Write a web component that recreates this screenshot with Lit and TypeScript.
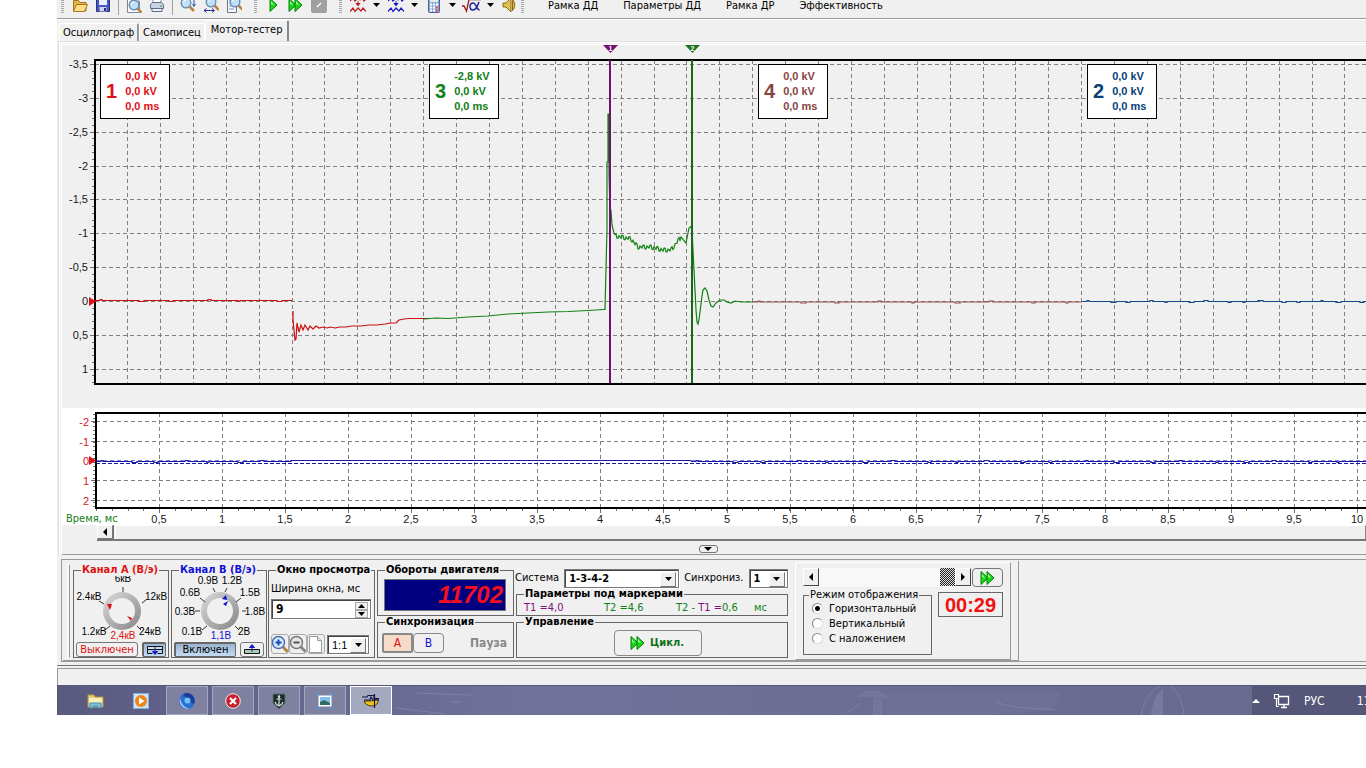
import { LitElement, html, svg, css } from "lit";
import { customElement, state } from "lit/decorators.js";

const UI = css`"DejaVu Sans Condensed", "DejaVu Sans", sans-serif`;
const ARIAL = css`"Liberation Sans", Arial, sans-serif`;

/* ---------- icons ---------- */

const icon = (body: unknown, w = 16, h = 16) =>
  html`<svg width=${w} height=${h} viewBox="0 0 ${w} ${h}" aria-hidden="true">${body}</svg>`;

const lens = (cx: number, cy: number) => svg`
  <path d="M${cx + 3} ${cy + 3}l5 5" stroke="#b98445" stroke-width="2.6"/>
  <circle cx=${cx} cy=${cy} r="4.8" fill="#bfe0f7" stroke="#6d8fb5" stroke-width="1.4"/>
  <path d="M${cx - 2.6} ${cy - 0.6}a2.8 2.8 0 0 1 2.6-2.2" stroke="#fff" fill="none"/>`;

const sheet = svg`
  <path d="M1.500 .5h8l4 4v11h-12z" fill="#fff" stroke="#7d8794"/>
  <path d="M9.500 .5v4h4" fill="#dfe6ee" stroke="#7d8794"/>`;

const openIcon = icon(svg`
  <path d="M1.500 14V3.500h5l1.500 2h6V14z" fill="#e8b44a" stroke="#a8741c"/>
  <path d="M1.500 14.500L4.500 7.500h11l-3 7z" fill="#ffe08a" stroke="#a8741c"/>`);
const saveIcon = icon(svg`
  <path d="M1.500 1.500h13v13h-13z" fill="#4a55c8" stroke="#2a3080"/>
  <path d="M4 2h8v6H4z" fill="#e9eefc"/><path d="M4.500 10h7v4.500h-7z" fill="#cfd3de"/>
  <path d="M9 11h2v3H9z" fill="#2a3080"/>`);
const previewIcon = icon(svg`${sheet}${lens(8, 8)}`);
const printIcon = icon(svg`
  <path d="M4.500 1.500h8l-1 5h-8z" fill="#fff" stroke="#8a93a2"/>
  <path d="M1.500 7.500l2-2h9l2 2v4h-13z" fill="#c9d4e3" stroke="#5e6d85"/>
  <path d="M3 11.500h10v3H3z" fill="#eef2f8" stroke="#5e6d85"/><path d="M11 9h2" stroke="#3a8c3a"/>`);
const zoomVIcon = icon(svg`${lens(6, 6)}<path d="M14 0v9M12.500 2.500L14 .5l1.500 2M12.500 7L14 9.500 15.500 7" stroke="#2b4fa8" fill="none"/>`);
const zoomHIcon = icon(svg`${lens(8, 5)}<path d="M1 13.500h10M3.500 11.500L1 13.500l2.500 2M9 11.500l2.500 2-2.500 2" stroke="#2b2f98" fill="none"/>`);
const zoomPageIcon = icon(svg`
  <path d="M1.500 .5h9v15h-9z" fill="#f5f7fa" stroke="#6c7683"/>
  <path d="M3 3h5M3 6h3M3 9h4M3 12h5" stroke="#7b98bb"/>${lens(9, 5)}`);
const tri = (x: number) => svg`
  <path d="M${x} 1.500v13l7-6.500z" fill="#16d816" stroke="#0b7a0b"/>
  <path d="M${x + 1} 4v3l3 1z" fill="#aaffaa"/>`;
const playIcon = icon(tri(5));
const fastIcon = icon(svg`${tri(1)}${tri(7)}`);
const offIcon = icon(svg`<rect width="16" height="16" rx="2" fill="#a0a0a0"/><path d="M6 10l4-4" stroke="#fff" stroke-width="1.500"/>`);
const waveIcon = (c: string) => icon(svg`
  <path d="M0 4l3-3 2 3 3-3 2 2 2-2 2 3 2-2" fill="none" stroke=${c} stroke-width="1.200"/>
  <path d="M0 14.500l3-3.500 2 3.500 3-3.500 3 3 2-3 3 3.500" fill="none" stroke=${c} stroke-width="1.200"/>
  <path d="M8 4v5M6 6.500h4L8 8.500z" fill=${c} stroke=${c}/>`);
const calcIcon = icon(svg`
  <rect x="2.500" y=".5" width="11" height="15" rx="1" fill="#8fa9d8" stroke="#4b5f96"/>
  <path d="M4 2h8v3H4z" fill="#dff0e0"/>
  <path d="M4 7.500h8M4 10.500h8M4 13.500h8" stroke="#fff" stroke-width="2" stroke-dasharray="2 1"/>
  <path d="M10 10.500h2M10 13.500h2" stroke="#d44" stroke-width="2"/>`);
const rootIcon = icon(svg`
  <path d="M0 9h2l2.500 5L7 2.500h12" fill="none" stroke="#a01818" stroke-width="1.300"/>
  <path d="M17 5c-2 6-4 8-6 8s-3-1.500-3-3.500S9 6 11.500 6s3 7 6 7" fill="none" stroke="#24249a" stroke-width="1.500"/>`, 19);
const speakerIcon = icon(svg`
  <path d="M1 6h3l5-5v14l-5-5H1z" fill="#e3c04a" stroke="#8a6a14"/>
  <path d="M10.500 2.500c3 3 3 8 0 11z" fill="#d7b55a" stroke="#8a6a14"/>`);

const zoomIn = icon(svg`<path d="M11 11l6 6" stroke="#b98445" stroke-width="3"/><circle cx="7.500" cy="7.500" r="6" fill="#d6ecff" stroke="#4a6fae" stroke-width="1.500"/><path d="M4.500 7.500h6M7.500 4.500v6" stroke="#1c49b8" stroke-width="2"/>`, 18, 18);
const zoomOut = icon(svg`<path d="M11 11l6 6" stroke="#888" stroke-width="3"/><circle cx="7.500" cy="7.500" r="6" fill="#e6e6e6" stroke="#777" stroke-width="1.500"/><path d="M4.500 7.500h6" stroke="#555" stroke-width="2"/>`, 18, 18);
const blankPage = icon(svg`<path d="M2.500 1.500h8l4 4v12h-12z" fill="#fff" stroke="#999"/><path d="M10.500 1.500v4h4" fill="#e4e4e4" stroke="#999"/>`, 18, 18);
const dirDown = icon(svg`
  <path d="M1.500 1.500h15v3h-15z" fill="#d5dde8" stroke="#111"/>
  <path d="M1.500 4.500v4h5M16.500 4.500v4h-5" fill="none" stroke="#111"/>
  <path d="M9 2v5M6.500 6.500h5L9 9.500z" stroke="#1818c8" fill="#1818c8"/>`, 18, 11);
const dirUp = icon(svg`
  <path d="M1.500 5.500h15v4h-15z" fill="#a9cfae" stroke="#111"/>
  <path d="M9 8V3M6.500 3.500h5L9 .5z" stroke="#1818c8" fill="#1818c8"/>`, 18, 11);

const arrow = (dir: "left" | "right" | "up" | "down", w: number, h: number) => {
  const d = { left: `M${w} 0v${h}L0 ${h / 2}z`, right: `M0 0v${h}L${w} ${h / 2}z`,
    up: `M0 ${h}h${w}L${w / 2} 0z`, down: `M0 0h${w}L${w / 2} ${h}z` }[dir];
  return icon(svg`<path d=${d} fill="#000"/>`, w, h);
};

/* ---------- taskbar icons ---------- */

const folderTask = icon(svg`
  <path d="M1 3h6l1 2h8v10H1z" fill="#e7cf7a" stroke="#b79b45"/><path d="M2 6h13v5H2z" fill="#f8eeb6"/>
  <path d="M3 16v-5h11v5h-3v-2H6v2z" fill="#79c3e6" stroke="#3f8fb8"/>`, 17, 17);
const playerTask = icon(svg`
  <rect x=".5" y=".5" width="15" height="15" fill="#cfe5f5" stroke="#7fb2d8"/>
  <circle cx="8" cy="8" r="6" fill="#f08418"/><path d="M6 4.500v7l5.500-3.500z" fill="#fff"/>`);
const browserTask = icon(svg`
  <circle cx="8" cy="8" r="8" fill="#2d6fcf"/><path d="M8 0a8 8 0 0 1 7 11L10 8 4 1z" fill="#1b3c9a"/>
  <path d="M1 5a8 8 0 0 0 9 10.500C4 14 2 10 1 5z" fill="#9fd0f5"/><circle cx="8.500" cy="7.500" r="3" fill="#6fc3f7"/>`);
const crossTask = icon(svg`
  <circle cx="8" cy="8" r="7.300" fill="#c8202c" stroke="#eee"/><path d="M5 5l6 6M11 5l-6 6" stroke="#fff" stroke-width="2.200"/>`);
const anchorTask = icon(svg`
  <path d="M2 1h12v9l-6 6-6-6z" fill="#1d2b2b" stroke="#53706c"/>
  <path d="M8 3v10M5.500 6h5M4 9c1 3 3 3.500 4 4 1-.5 3-1 4-4" stroke="#d5e2dc" fill="none" stroke-width="1.200"/><circle cx="8" cy="3.500" r="1.200" fill="#d5e2dc"/>`);
const pictureTask = icon(svg`
  <path d="M.5 4V.5H4M12 .5h3.500V4M15.500 12v3.500H12M4 15.500H.5V12" fill="none" stroke="#48a0e0"/>
  <rect x="1.500" y="2.500" width="13" height="11" fill="#fff"/><path d="M3 4h10v8H3z" fill="#7fc0ee"/><path d="M3 12V9l4-2 6 3v2z" fill="#2c6a62"/>`);
const scopeTask = icon(svg`
  <path d="M2 8c2 6 12 7 14 1v-3L9 8z" fill="#f0c420" stroke="#4a3c08"/>
  <path d="M0 4h5l1-1.500h6v3h5M2 7h6l1-3 2 3h6M12.500 1v14" fill="none" stroke="#15154a" stroke-width="1.200"/>`, 18);
const netTask = icon(svg`
  <path d="M5.500 3.500h10v8h-10zM8 14.500h6M11 11.500v3" fill="none" stroke="#fff" stroke-width="1.300"/>
  <path d="M1.500 1.500h4v4h-4zM3.500 5.500v8h2" fill="#4e5078" stroke="#fff" stroke-width="1.200"/>`, 17);

/* ---------- oscillogram ---------- */

const COL = 32.9;
const ROW = 33.86;
const HALF_MS = 63.05;
const ZERO = 241;
const SPAN = 4000;

const noisy = (x0: number, x1: number, y: number, every: number) => {
  let d = `M${x0} ${y}`;
  for (let x = x0 + 5, i = 0; x < x1 - 12; x += every, i++) {
    const w = 2 + (i * 7) % 4;
    d += `H${x + (i * 5) % 9}v${i % 3 ? 1 : -1}h${w}V${y}`;
  }
  return d + `H${x1}`;
};

const plateau = () => {
  const base: [number, number][] = [
    [517, 165], [519, 173], [521, 176], [536, 179], [543, 187], [556, 187], [568, 190], [576, 190],
    [586, 177], [591, 183], [594, 168], [597, 166],
  ];
  let d = "L516 150";
  for (let i = 0; i < base.length - 1; i++) {
    const [xa, ya] = base[i], [xb, yb] = base[i + 1];
    for (let x = xa; x < xb; x++) {
      const j = xa > 519 && xa < 586 ? [0, 2, -2, 1, -1, 2, -2][(x * 3) % 7] : 0;
      d += `L${x} ${(ya + ((yb - ya) * (x - xa)) / (xb - xa) + j).toFixed(1)}`;
    }
  }
  return d + "L597 170 598 190 600 230 601 250 602 262 603 264 604 260 605 252 606 244 607 236 608 230 610 228 612 231 614 240 616 246 618 247 621 243 625 240 629 240 632 242 636 243 640 241 646 242H658";
};

const TRACES: [string, string][] = [
  ["#c81010", noisy(0, 197, 240.5, 34)],
  ["#c81010", "M198 251v9l2 20 1-1 1-16 2 9 2-7 2 5 2-5 3 5 2-4 3 3 3-3 3 2 4-1 4 1 3-1 5 1 5-1h6l6-1h9l8-1h8l8-1 6-1h5l3-3 5-1 5-.5h20"],
  ["#108010", "M329 259l12-1 12 .5 20-1.500 20-1 20-2 20-1 20-1 20-.5 20-1 16-1h1L512 168V102h1V54h1v60l1 36" + plateau()],
  ["#904848", noisy(658, 987, 242, 38)],
  ["#104888", noisy(987, SPAN, 241.5, 19)],
];

const range = (n: number) => Array.from({ length: Math.max(0, n) }, (_, i) => i);
const comma = (n: number) => String(n).replace(".", ",");

const mainPlot = (width: number) => svg`
  <g transform="translate(33 15)">
    ${range(Math.ceil((width - 95) / COL)).map((i) => {
      const x = Math.round((i + 1) * COL - 0.8) + 0.5;
      return svg`<path class="grid" d="M${x} 0V324"/>`;
    })}
    ${range(10).map((i) => {
      const y = Math.round(4 + i * ROW) + 0.5;
      return svg`<path class="grid" d="M0 ${y}H${SPAN}"/><path class="tick" d="M-5 ${y}h4"/>
        <text class="num" x="-7" y=${y + 3.5} text-anchor="end">${comma(-3.5 + i * 0.5)}</text>`;
    })}
    ${range(48).map((i) => svg`<path class="tick" d="M-3 ${Math.round(4 + i * 6.77) + 0.5}h2"/>`)}
    <path d="M${SPAN} 0H0V324H${SPAN}" fill="none" stroke="#000" stroke-width="2"/>
    ${TRACES.map(([c, d]) => svg`<path class="trace" d=${d} stroke=${c}/>`)}
    <path d="M-6 ${ZERO - 4}v9l7-4.500z" fill="#e01010"/>
    <path d="M515 0V323" stroke="#701070" stroke-width="2"/>
    <path d="M597 0V323" stroke="#186818" stroke-width="2"/>
    <path d="M508 -15h15l-7.500 8z" fill="#701070"/><text class="mark" x="515.500" y="-9">1</text>
    <path d="M590 -15h15l-7.500 8z" fill="#187018"/><text class="mark" x="597.500" y="-9">2</text>
  </g>`;

const lowerPlot = (width: number) => svg`
  <g transform="translate(34 5)">
    ${range(Math.floor((width - 104) / HALF_MS)).map((i) => {
      const x = Math.round((i + 1) * HALF_MS) + 0.5;
      return svg`<path class="grid" d="M${x} 0V94"/><path class="tick" d="M${x} 96v4"/>
        <text class="num" x=${x - 0.5} y="110" text-anchor="middle">${comma((i + 1) / 2)}</text>`;
    })}
    ${range(Math.ceil((width - 96) / 15.76)).map((i) => svg`<path class="tick" d="M${Math.round(i * 15.76) + 0.5} 96v2"/>`)}
    ${range(5).map((i) => {
      const y = Math.round(8 + i * 19.7) + 0.5;
      return svg`<path class=${i === 2 ? "grid zero" : "grid"} d="M0 ${y}H${SPAN}"/><path class="tick" d="M-5 ${y}h4"/>
        <text class="num red" x="-7" y=${y + 4} text-anchor="end">${i - 2}</text>`;
    })}
    ${range(24).map((i) => svg`<path class="tick" d="M-3 ${i * 4 + 1.5}h2"/>`)}
    <path d="M0 50.500H${SPAN}" stroke="#1818a8" stroke-dasharray="4 2"/>
    <path class="trace" stroke="#1818a8" d=${noisy(0, 195, 48.5, 26) + "V47.500H595" + noisy(595, SPAN, 48.5, 32)}/>
    <path d="M${SPAN} 0H0V95H${SPAN}" fill="none" stroke="#000" stroke-width="2"/>
    <path d="M-7 43v9l7-4.500z" fill="#e01010"/>
  </g>
  <text class="num time" x="4" y="114">Время, мс</text>`;

/* ---------- channel knob ---------- */

interface Knob { color: string; value: string; marks: [string, number, number][]; ticks: string; pointer: string; }

const KNOB_A: Knob = {
  color: "#e01010", value: "2,4кВ",
  marks: [["6кВ", 49, 6], ["2.4кВ", 15, 24], ["12кВ", 82, 24], ["1.2кВ", 20, 59], ["24кВ", 76, 59]],
  ticks: "M49 11v5M25 25l5 3M68 27l4-3M31 54l5-4M63 50l4 4",
  pointer: "M33 28h5l-2 6zM53 40l5 2-1 3z",
};
const KNOB_B: Knob = {
  color: "#1010d8", value: "1,1В",
  marks: [["0.9В", 36, 8], ["1.2В", 60, 8], ["0.6В", 18, 20], ["1.5В", 78, 20], ["0.3В", 13, 39], ["1.8В", 83, 39], ["0.1В", 20, 59], ["2В", 72, 59]],
  ticks: "M41 12l2 4M55 12l-2 4M28 22l5 4M69 22l-5 4M23 35h5M70 35h4M30 54l5-4M63 50l4 4",
  pointer: "M50 23l4-4 1 5zM51 28l5-3-2 5z",
};

const knob = (k: Knob, id: string) => html`<svg class="knob" width="100%" height="66" aria-hidden="true">
  <defs><linearGradient id=${id} x1="0" y1="0" x2="1" y2="1"><stop offset="0" stop-color="#dcdcdc"/><stop offset="1" stop-color="#858585"/></linearGradient></defs>
  <circle cx="48" cy="35" r="19" fill="url(#${id})"/>
  <circle cx="48" cy="35" r="13" fill="#f0f0f0"/>
  <path d=${k.ticks} stroke="#333" fill="none"/>
  <path d=${k.pointer} fill=${k.color}/>
  ${k.marks.map(([t, x, y]) => svg`<text class="scale" x=${x} y=${y} text-anchor="middle">${t}</text>`)}
  <text class="scale" x="49" y="63" text-anchor="middle" fill=${k.color}>${k.value}</text>
</svg>`;

const CARDS = [
  { n: "1", color: "#e01018", v: ["0,0 kV", "0,0 kV", "0,0 ms"] },
  { n: "3", color: "#108018", v: ["-2,8 kV", "0,0 kV", "0,0 ms"] },
  { n: "4", color: "#884444", v: ["0,0 kV", "0,0 kV", "0,0 ms"] },
  { n: "2", color: "#084078", v: ["0,0 kV", "0,0 kV", "0,0 ms"] },
];

@customElement("app-root")
export class AppRoot extends LitElement {
  @state() private mode = 0;
  @state() private pageWidth = window.innerWidth;

  private onResize = () => { this.pageWidth = window.innerWidth; };

  connectedCallback() {
    super.connectedCallback();
    window.addEventListener("resize", this.onResize);
  }

  disconnectedCallback() {
    window.removeEventListener("resize", this.onResize);
    super.disconnectedCallback();
  }

  static styles = css`
    :host { display: block; overflow: hidden; font: 11px/14px ${UI}; color: #000; background: #fff; }
    * { box-sizing: border-box; }
    svg { display: block; flex: none; }
    button { font: inherit; color: inherit; padding: 0; margin: 0; border: 0; background: none; display: flex; align-items: center; justify-content: center; flex: none; }
    select, input { font: inherit; color: inherit; margin: 0; }
    .window { margin-left: 57px; background: #f0f0f0; }

    .toolbar { display: flex; align-items: center; height: 27px; margin-top: -8px; padding-left: 4px; border-bottom: 1px solid #999; box-shadow: 0 1px #fff; }
    .grip { width: 3px; height: 18px; margin-right: 4px; background: repeating-linear-gradient(#a8a8a8 0 1px, #f0f0f0 1px 2px); flex: none; }
    .grip.spaced { margin-left: 9px; }
    .sep { width: 8px; height: 20px; display: flex; justify-content: center; }
    .sep::before { content: ""; width: 1px; background: #a0a0a0; }
    .tool { width: 23px; height: 22px; }
    .drop { width: 15px; height: 22px; }
    .menu { display: flex; gap: 25px; margin-left: 20px; padding-top: 2px; line-height: 12px; white-space: nowrap; }

    .tabs { display: flex; align-items: flex-end; height: 21px; margin-top: 1px; padding-left: 2px; }
    .tab { height: 18px; padding: 0 3px; border: 1px solid #fff; border-right: 2px solid #999; border-bottom: 0; border-radius: 2px 2px 0 0; }
    .tab.plain { border-right: 1px solid #fff; }
    .tab.active { height: 21px; padding: 0 5px 3px; border-right: 2px solid #888; }

    .page { margin-left: 1px; padding: 2px 0 0 2px; border: 1px solid #dedede; border-width: 1px 0 0 1px; box-shadow: inset 1px 1px #fff; }
    .panel { border: 1px solid #fff; border-width: 1px 0 0 1px; }
    .plot { position: relative; }
    .plot.white { background: #fff; }
    .plot > svg { width: 100%; overflow: hidden; }
    .grid { stroke: #808080; stroke-dasharray: 4 3; fill: none; }
    .grid.zero { stroke: #8080d8; }
    .tick { stroke: #707070; }
    .trace { fill: none; stroke-width: 1.2px; }
    .num { font: 11px ${ARIAL}; fill: #181818; }
    .num.red { fill: #d01818; }
    .num.time { font-family: ${UI}; fill: #108010; }
    .mark { font: bold 7px ${ARIAL}; fill: #fff; text-anchor: middle; }
    .cards { position: absolute; inset: 19px auto auto 38px; display: flex; gap: 259px; }
    .card { width: 70px; height: 55px; flex: none; display: flex; align-items: center; gap: 8px; padding-left: 5px; border: 1px solid #000; background: #fff; font: bold 11px/15px ${ARIAL}; white-space: pre; }
    .card b { font-size: 20px; }

    .hscroll { display: flex; margin-left: 35px; height: 16px; border-bottom: 2px solid #777; }
    .raised { background: #f0f0f0; border: 1px solid #fff; border-right-color: #777; border-bottom-color: #777; box-shadow: 1px 1px #444; }
    .hscroll .raised { width: 16px; height: 14px; box-shadow: 1px 0 #777; }
    .thumb { flex: 1; margin-left: 2px; border: 1px solid #fff; border-right: 1px solid #888; border-bottom: 0; }
    .split { display: flex; height: 14px; justify-content: center; align-items: flex-end; padding: 0 12px 1px 0; border-bottom: 1px solid #999; }
    .split button { width: 19px; height: 8px; border: 1px solid #777; border-radius: 3px; }

    .controls { margin: 4px 0 0 4px; border: 1px solid #999; border-right: 0; padding: 1px 0 0 1px; }
    .band { display: flex; width: max-content; height: 100px; padding: 3px 7px 2px 4px; border-right: 1px solid #999; border-bottom: 1px solid #999; }
    .handle { width: 3px; margin-right: 3px; border: 1px solid #fff; border-right-color: #999; }
    .col { display: flex; flex-direction: column; }
    .duo { display: flex; gap: 2px; margin-right: 1px; }
    fieldset { margin: 0; padding: 0; min-width: 0; border: 1px solid #666; }
    legend { margin: 0 0 0 7px; padding: 0 1px; height: 12px; font: bold 11px/12px ${UI}; white-space: nowrap; }
    .chan { width: 96px; height: 94px; }
    .knob { overflow: hidden; }
    .scale { font: 10px ${ARIAL}; }
    .red { color: #e01010; }
    .blue { color: #1010d8; }
    .row { display: flex; align-items: center; }
    .between { justify-content: space-between; }
    .chan .row { padding: 0 2px; }
    .btn { height: 15px; border: 1px solid #777; border-radius: 3px; }
    .btn.state { width: 62px; }
    .btn.dir { width: 24px; }
    .btn.down { background: linear-gradient(#9db4d0, #c4dcf4); border: 2px solid #666; border-radius: 2px; border-right-width: 1px; border-bottom-width: 1px; }

    .view { width: 107px; height: 94px; margin-right: 2px; }
    .view .body { padding: 6px 3px 0 2px; }
    .sunken { border: 1px solid #777; box-shadow: inset 1px 1px #444, 1px 1px #fff; background: #fff; }
    .spin { display: flex; margin-top: 3px; height: 20px; padding: 2px; }
    .spin input { width: 100%; min-width: 0; border: 0; padding: 0 2px; font: bold 12px/14px ${UI}; background: transparent; outline: 0; }
    .spin .col { flex: none; width: 13px; }
    .spin button { height: 8px; background: #f0f0f0; border: 1px solid #aaa; }
    .zooms { margin-top: 15px; height: 20px; }
    .zooms button { width: 18px; height: 20px; border: 1px solid #aaa; border-radius: 3px; overflow: hidden; }
    .combo { display: flex; height: 19px; padding: 2px; }
    .combo select { appearance: none; flex: 1; min-width: 0; border: 0; padding: 0 2px; background: transparent; font: bold 11px/14px ${UI}; outline: 0; }
    .combo .cap { width: 16px; height: 15px; flex: none; display: grid; place-items: center; box-shadow: none; }
    .combo.thin select { font-weight: normal; font-family: ${ARIAL}; }
    .zooms .combo { width: 42px; margin-left: 2px; }

    .engine { width: 137px; margin-right: 1px; }
    .rpm { height: 52px; }
    .lcd { display: block; height: 32px; margin: 3px 7px 0 6px; padding-right: 2px; border: 1px solid #777; background: #000080; color: #f01020; font: italic bold 24px/30px ${ARIAL}; text-align: right; }
    .sync { height: 42px; }
    .sync .row { padding: 5px 6px 0 4px; }
    .sync button { width: 31px; height: 20px; border: 1px solid #888; border-radius: 4px; font: 12px/14px ${UI}; }
    .sync button.on { background: #f6dcc8; border: 2px solid #888; border-radius: 2px; }
    .pause { margin-left: auto; font: bold 12px/14px ${UI}; color: #888; }

    .manage { width: 273px; margin-right: 7px; }
    .system { height: 24px; padding-top: 4px; gap: 5px; white-space: nowrap; }
    .system .wide { width: 115px; }
    .system .small { width: 39px; }
    .params { height: 28px; width: 272px; margin-left: 1px; }
    .params .row { padding: 1px 7px 0; height: 14px; }
    .params span:nth-child(1) { width: 80px; }
    .params span:nth-child(2) { width: 72px; }
    .params span:nth-child(3) { width: 78px; }
    .green { color: #108018; }
    .purple { color: #801080; }
    .run { height: 42px; width: 272px; margin-left: 1px; }
    .run button { width: 88px; height: 26px; margin: 2px 0 0 97px; padding-right: 2px; gap: 4px; border: 1px solid #888; border-radius: 4px; color: #107018; font-weight: bold; }

    .right { width: 216px; height: 98px; margin-top: -2px; padding: 5px 7px; border: 1px solid #fff; border-right-color: #999; border-bottom-color: #999; }
    .top { display: flex; gap: 1px; height: 19px; }
    .bar { flex: 1; display: flex; justify-content: space-between; background: #f8f8f8; }
    .bar .raised { width: 16px; height: 18px; box-shadow: none; border-right-color: #444; border-bottom-color: #444; }
    .dither { width: 15px; height: 18px; margin-left: auto; background: conic-gradient(#222 25%, #ddd 0 50%, #222 0 75%, #ddd 0) 0 0 / 2px 2px; }
    .top .btn { width: 31px; height: 19px; border-radius: 4px; }
    .modes { width: 129px; height: 66px; }
    .modes legend { font-weight: normal; margin-left: 5px; }
    .modes label { display: flex; align-items: center; gap: 6px; height: 15px; padding-left: 8px; white-space: nowrap; }
    .modes input { appearance: none; width: 11px; height: 11px; border: 1px solid #888; border-right-color: #ddd; border-bottom-color: #ddd; border-radius: 50%; background: #fff; flex: none; }
    .modes input:checked { background: radial-gradient(#000 0 2px, #fff 3px); }
    .timer { width: 65px; height: 25px; margin: 3px 0 0; border: 1px solid #666; color: #f01010; font: bold 20px/24px ${ARIAL}; text-align: center; }
    .lower { display: flex; justify-content: space-between; margin-top: 2px; }

    .status { height: 17px; margin-top: 2px; border: 1px solid #999; border-width: 1px 0 0 1px; }
    .edge { height: 1px; margin-top: 3px; background: #777; }
    .taskbar { display: flex; height: 30px; padding-left: 17px; background: linear-gradient(90deg, #5a5a7e 0, #60608a 110px, #70729a 480px, #6a6c90 900px, #686a8e); border-top: 1px solid #55567a; overflow: hidden; }
    .task { width: 42px; height: 29px; margin-right: 4px; border: 1px solid transparent; }
    .task.open { background: #8081a0; border-color: #a6a7be; }
    .task.current { background: #a4a9bf; border-color: #fff; }
    .art { flex: 1; min-width: 0; height: 29px; opacity: .6; }
    .tray { flex: none; display: flex; align-items: center; width: 114px; height: 29px; background: #555678; color: #fff; font: 12px/14px ${UI}; white-space: nowrap; overflow: hidden; }
    .tray .lang { margin: 0 32px 0 14px; }
    .tray .net { margin: 0 0 0 13px; }
  `;

  private toolbar() {
    const t = (name: string, i: unknown) => html`<button class="tool" aria-label=${name}>${i}</button>`;
    const d = () => html`<button class="drop" aria-label="Ещё">${arrow("down", 7, 4)}</button>`;
    return html`<div class="toolbar">
      <i class="grip"></i>${t("Открыть", openIcon)}${t("Сохранить", saveIcon)}<i class="sep"></i>
      ${t("Просмотр", previewIcon)}${t("Печать", printIcon)}<i class="sep"></i>
      ${t("Масштаб по вертикали", zoomVIcon)}${t("Масштаб по горизонтали", zoomHIcon)}${t("Масштаб", zoomPageIcon)}
      <i class="grip spaced"></i>${t("Пуск", playIcon)}${t("Цикл", fastIcon)}${t("Стоп", offIcon)}
      <i class="grip spaced"></i>${t("Канал А", waveIcon("#c01818"))}${d()}${t("Канал В", waveIcon("#1818c0"))}${d()}
      ${t("Калькулятор", calcIcon)}${d()}${t("Формула", rootIcon)}${d()}${t("Звук", speakerIcon)}
      <i class="grip"></i>
      <div class="menu"><button>Рамка ДД</button><button>Параметры ДД</button><button>Рамка ДР</button><button>Эффективность</button></div>
    </div>`;
  }

  private channel(title: string, cls: string, k: Knob, id: string, on: boolean) {
    return html`<fieldset class="chan"><legend class=${cls}>${title}</legend>
      ${knob(k, id)}
      <div class="row between">
        <button class="btn state ${on ? "down" : "red"}">${on ? "Включен" : "Выключен"}</button>
        <button class="btn dir ${on ? "" : "down"}" aria-label="Полярность">${on ? dirUp : dirDown}</button>
      </div></fieldset>`;
  }

  private combo(label: string, value: string, cls: string) {
    return html`<span class="combo sunken ${cls}"><select aria-label=${label}><option>${value}</option></select><i class="cap raised">${arrow("down", 7, 4)}</i></span>`;
  }

  render() {
    const modes = ["Горизонтальный", "Вертикальный", "С наложением"];
    return html`<main class="window">
      ${this.toolbar()}
      <div class="tabs" role="tablist">
        <button class="tab" role="tab">Осциллограф</button>
        <button class="tab plain" role="tab">Самописец</button>
        <button class="tab active" role="tab" aria-selected="true">Мотор-тестер</button>
      </div>
      <section class="page"><div class="panel">
        <div class="plot">
          <svg height="363">${mainPlot(this.pageWidth)}</svg>
          <div class="cards">${CARDS.map((c) => html`<div class="card" style="color:${c.color}"><b>${c.n}</b><div>${c.v.map((v) => html`${v}<br>`)}</div></div>`)}</div>
        </div>
        <div class="plot white"><svg height="117">${lowerPlot(this.pageWidth)}</svg></div>
        <div class="hscroll"><button class="raised" aria-label="Влево">${arrow("left", 4, 8)}</button><div class="thumb"></div></div>
        <div class="split"><button aria-label="Свернуть">${arrow("down", 8, 4)}</button></div>
      </div></section>

      <section class="controls"><div class="band">
        <i class="handle"></i>
        <div class="duo">
          ${this.channel("Канал А (В/э)", "red", KNOB_A, "ka", false)}
          ${this.channel("Канал В (В/э)", "blue", KNOB_B, "kb", true)}
        </div>
        <fieldset class="view"><legend>Окно просмотра</legend><div class="body">
          <label for="width">Ширина окна, мс</label>
          <div class="spin sunken"><input id="width" type="text" .value=${"9"}>
            <div class="col"><button aria-label="Больше">${arrow("up", 7, 4)}</button><button aria-label="Меньше">${arrow("down", 7, 4)}</button></div></div>
          <div class="row zooms"><button aria-label="Увеличить">${zoomIn}</button><button aria-label="Уменьшить">${zoomOut}</button><button aria-label="Страница">${blankPage}</button>${this.combo("Масштаб", "1:1", "thin")}</div>
        </div></fieldset>
        <div class="col engine">
          <fieldset class="rpm"><legend>Обороты двигателя</legend><output class="lcd">11702</output></fieldset>
          <fieldset class="sync"><legend>Синхронизация</legend><div class="row">
            <button class="on red">А</button><button class="blue">В</button><span class="pause">Пауза</span></div></fieldset>
        </div>
        <div class="col manage">
          <div class="row system"><span>Система</span>${this.combo("Система", "1-3-4-2", "wide")}<span>Синхрониз.</span>${this.combo("Синхрониз.", "1", "small")}</div>
          <fieldset class="params"><legend>Параметры под маркерами</legend><div class="row green">
            <span class="purple">Т1 =4,0</span><span>Т2 =4,6</span><span>Т2 - <span class="purple">Т1 =</span>0,6</span><span>мс</span></div></fieldset>
          <fieldset class="run"><legend>Управление</legend><button>${fastIcon}Цикл.</button></fieldset>
        </div>
        <div class="right">
          <div class="top"><div class="bar"><button class="raised" aria-label="Назад">${arrow("left", 4, 8)}</button><i class="dither"></i><button class="raised" aria-label="Вперёд">${arrow("right", 4, 8)}</button></div><button class="btn" aria-label="Цикл">${fastIcon}</button></div>
          <div class="lower">
            <fieldset class="modes"><legend>Режим отображения</legend>
              ${modes.map((m, i) => html`<label><input type="radio" name="mode" .checked=${this.mode === i} @change=${() => (this.mode = i)}>${m}</label>`)}
            </fieldset>
            <div class="timer">00:29</div>
          </div>
        </div>
      </div></section>
      <div class="edge"></div>
      <footer class="status"></footer>
      <nav class="taskbar">
        <button class="task" aria-label="Проводник">${folderTask}</button>
        <button class="task" aria-label="Проигрыватель">${playerTask}</button>
        <button class="task open" aria-label="Браузер">${browserTask}</button>
        <button class="task open" aria-label="Ошибка">${crossTask}</button>
        <button class="task open" aria-label="Игра">${anchorTask}</button>
        <button class="task open" aria-label="Изображения">${pictureTask}</button>
        <button class="task current" aria-label="Осциллограф">${scopeTask}</button>
        <svg class="art" viewBox="0 0 856 29" preserveAspectRatio="xMaxYMid slice">
          <path d="M20 7l55 2M55 16h10M0 22l50 6" stroke="#8b8db2" fill="none"/>
          <path d="M450 27l15-10M462 11c8-8 22-8 30 2M478 14h8v15h-8z" stroke="#8587aa" fill="#797b9f"/>
          <path d="M490 6h175l-8 18-60 5H490z" fill="#7678a0" opacity=".6"/>
          <path d="M600 16c20 8 45 6 60 8M745 29c4-16 10-26 20-29M775 0c8 6 12 18 13 29" stroke="#8a8caf" fill="none"/>
          <path d="M755 29c2-16 6-22 12-26v26z" fill="#8183a8"/>
        </svg>
        <div class="tray">${icon(svg`<path d="M0 4h8L4 0z" fill="#fff"/>`, 8, 4)}<span class="net">${netTask}</span><span class="lang">РУС</span><span>11</span></div>
      </nav>
    </main>`;
  }
}
